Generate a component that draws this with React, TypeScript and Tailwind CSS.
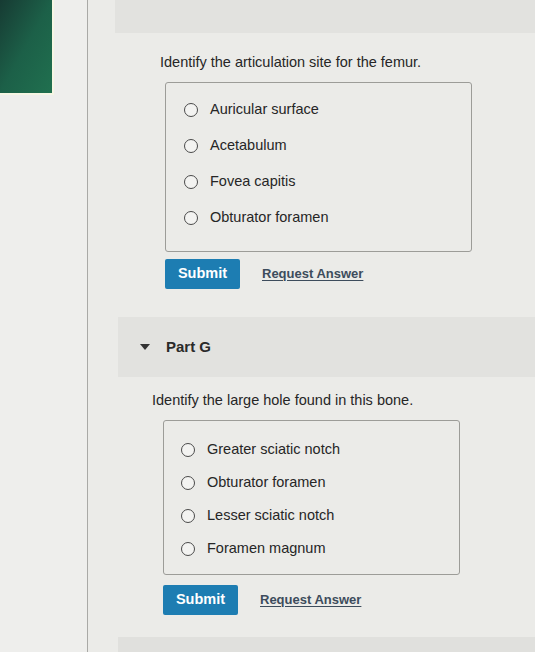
const partF = ["Auricular surface", "Acetabulum", "Fovea capitis", "Obturator foramen"];
const partG = ["Greater sciatic notch", "Obturator foramen", "Lesser sciatic notch", "Foramen magnum"];

function Option({ label }: { label: string }) {
  return (
    <div className="flex items-center h-[20px]">
      <span className="w-[14px] h-[14px] rounded-full border-[1.5px] border-[#4a4a4a] bg-[#f3f3f1] shrink-0" />
      <span className="ml-3 text-[14.5px] text-[#262626]">{label}</span>
    </div>
  );
}

function Actions() {
  return (
    <div className="flex items-center">
      <button className="h-[30px] w-[75px] rounded-[2px] bg-[#1d7db2] text-white text-[14.5px] font-bold">Submit</button>
      <a className="ml-[22px] text-[13px] font-bold text-[#3d4c5c] underline underline-offset-2">Request Answer</a>
    </div>
  );
}

export default function App() {
  return (
    <div className="flex w-[535px] h-[652px] bg-[#ebebe8] overflow-hidden" style={{ fontFamily: '"Liberation Sans", Arial, sans-serif' }}>
      <aside className="w-[88px] shrink-0 border-r border-[#a9a9a6] bg-[#eeeeec]">
        <div className="w-[54px] h-[95px] border-r-2 border-b-2 border-[#f6f6e4] bg-gradient-to-br from-[#163b33] via-[#1c6048] to-[#20704f]" />
      </aside>

      <main className="flex-1 flex flex-col">
        <div className="ml-[27px] h-[33px] bg-[#e2e2df]" />

        <p className="ml-[72px] mt-[19px] text-[14.5px] text-[#262626]">Identify the articulation site for the femur.</p>

        <div className="ml-[77px] mt-[8px] w-[307px] h-[170px] rounded-[3px] border border-[#9c9c98] pl-[18px] pt-[17px] flex flex-col gap-[16px]">
          {partF.map((o) => (
            <Option key={o} label={o} />
          ))}
        </div>

        <div className="ml-[77px] mt-[7px]">
          <Actions />
        </div>

        <div className="ml-[30px] mt-[28px] h-[60px] bg-[#e2e2df] flex items-center">
          <span className="ml-[22px] w-0 h-0 border-l-[5px] border-r-[5px] border-t-[6px] border-l-transparent border-r-transparent border-t-[#333]" />
          <span className="ml-[16px] text-[15px] font-bold text-[#2a2a2a]">Part G</span>
        </div>

        <p className="ml-[64px] mt-[13px] text-[14.5px] text-[#262626]">Identify the large hole found in this bone.</p>

        <div className="ml-[75px] mt-[8px] w-[297px] h-[155px] rounded-[3px] border border-[#9c9c98] pl-[17px] pt-[19px] flex flex-col gap-[13px]">
          {partG.map((o) => (
            <Option key={o} label={o} />
          ))}
        </div>

        <div className="ml-[75px] mt-[10px]">
          <Actions />
        </div>

        <div className="mt-auto ml-[30px] h-[15px] bg-[#e0e0dd]" />
      </main>
    </div>
  );
}
